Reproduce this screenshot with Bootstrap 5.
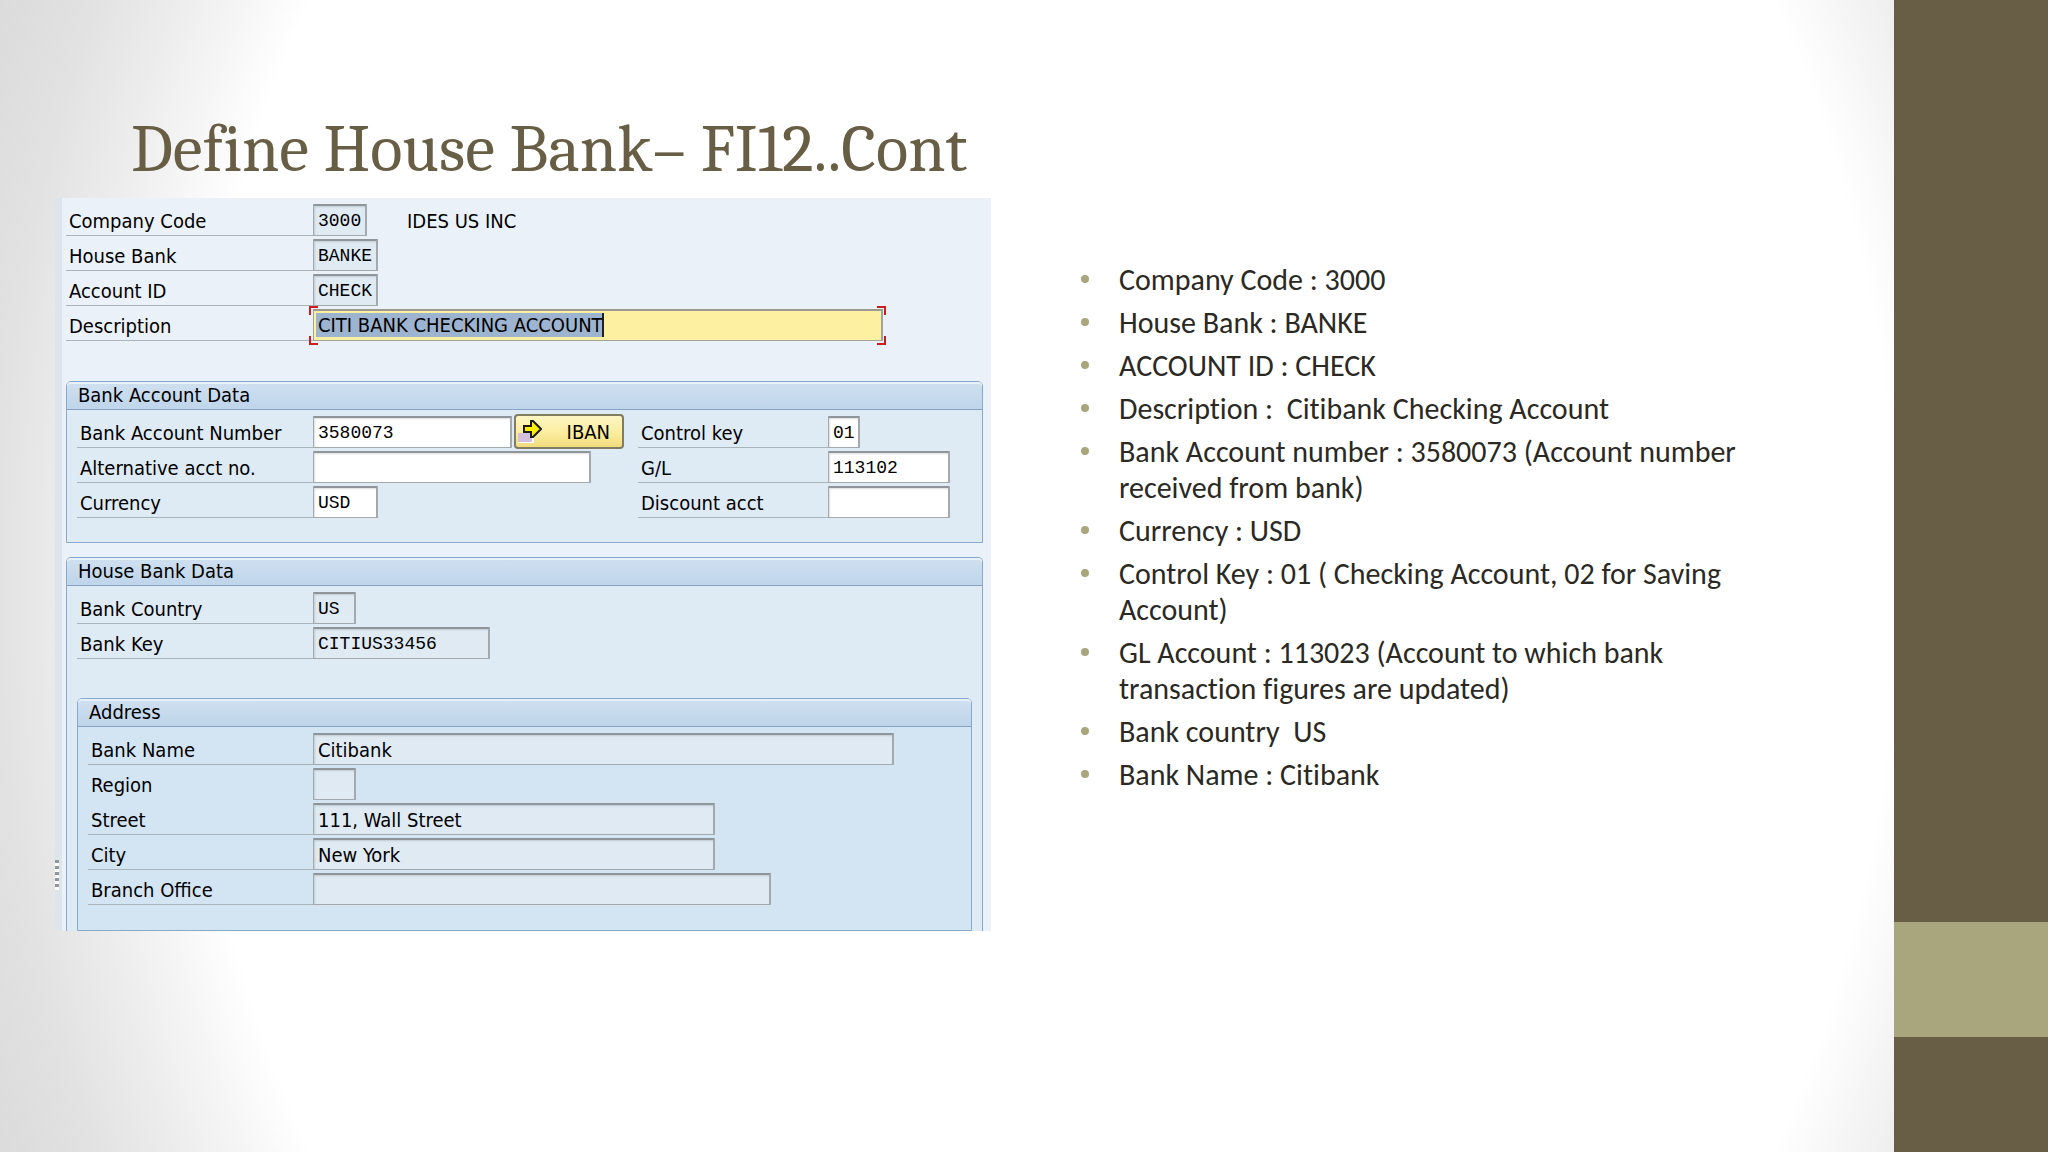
<!DOCTYPE html>
<html lang="en">
<head>
<meta charset="utf-8">
<meta name="viewport" content="width=device-width, initial-scale=1">
<title>Define House Bank</title>
<link href="https://cdn.jsdelivr.net/npm/bootstrap@5.3.0/dist/css/bootstrap.min.css" rel="stylesheet">
<style>
  .slide { background: #fff radial-gradient(ellipse 46% 98% at 55% 50%, #fff 98%, #f1f1f1 108%, #e2e2e2 120%, #d8d8d8 134%); }
  .slide-title { font: 400 67px/80px Caladea, "Liberation Serif", serif; color: #675e45; padding: 110px 0 0 131px; margin: 0 0 8px; }
  .sap-col { flex: 0 0 936px; margin-left: 55px; }
  .sap { background: #eaf1f8; border-left: 7px solid #dbe5ea; padding: 6px 8px 0 4px; font: 20px/26px "DejaVu Sans Condensed", "DejaVu Sans", sans-serif; color: #000; }
  .grip { position: absolute; left: -7px; top: 662px; width: 4px; height: 30px; background: repeating-linear-gradient(#8f979c 0 3px, #fff 3px 6px); }
  .line { display: flex; height: 32px; margin-bottom: 3px; }
  .cap { flex: none; border-bottom: 1px solid #a9b3ba; padding: 4px 0 0 3px; white-space: nowrap; }
  .cap-a { width: 247px; } .cap-b { width: 236px; } .cap-c { width: 225px; } .cap-d { width: 190px; }
  .cap.bare { border-color: transparent; }
  .fld { height: 32px; flex: none; border: 1px solid #a3a9ad; border-top: 2px solid #8f9599; border-right-width: 2px; border-radius: 1px; background: #dfeaf3; padding: 0 0 0 4px; color: #000; font: inherit; outline: 0; box-shadow: inset 1px 1px 2px #0002; }
  .fld.mono { font: 18px/26px "Liberation Mono", monospace; }
  .fld.open { background: #fff; }
  .c-2 { width: 32px; } .c-3 { width: 43px; } .c-4 { width: 54px; } .c-5 { width: 65px; } .c-8 { width: 122px; } .c-11 { width: 177px; }
  .c-18 { width: 199px; } .c-24 { width: 278px; } .c-28 { width: 402px; } .c-30 { width: 458px; } .c-40 { width: 581px; }
  .focus { width: 570px; height: 32px; background: #fdf0a0; border: 1px solid #a3a39a; border-top: 2px solid #9a9a90; border-right-width: 2px; padding: 2px; }
  .focus input { display: block; border: 0; padding: 0 0 0 2px; width: 100%; height: 24px; outline: 0; font: inherit; color: #000; background: linear-gradient(90deg, #9db4d0 286px, #222 286px) 0 0 / 288px 100% no-repeat; }
  .corner { position: absolute; width: 9px; height: 9px; border: 0 solid #cc1d20; }
  .tl { left: -5px; top: -5px; border-width: 2px 0 0 2px; } .tr { right: -5px; top: -5px; border-width: 2px 2px 0 0; }
  .bl { left: -5px; bottom: -5px; border-width: 0 0 2px 2px; } .br { right: -5px; bottom: -5px; border-width: 0 2px 2px 0; }
  .group { border: 1px solid #86a9cd; border-radius: 5px 5px 0 0; background: #deeaf4; }
  .group h2 { font: inherit; line-height: 27px; height: 28px; margin: 0 0 6px; padding: 0 0 0 11px; border-bottom: 1px solid #86a3c6; border-radius: 4px 4px 0 0; background: linear-gradient(#cfe0f0, #bfd5ea); box-shadow: inset 0 2px #e6f0f8; }
  .lines { padding: 0 10px; }
  .account { margin: 40px 0 14px; padding-bottom: 21px; }
  .account .left-half { width: 561px; }
  .house { border-bottom: 0; }
  .address { background: #d3e5f3; margin: 39px 10px 0; padding-bottom: 22px; }
  .iban { width: 110px; height: 35px; margin: -2px 0 0 2px; padding: 0 12px 0 2px; border: 2px solid #817c62; border-radius: 4px; background: linear-gradient(#fdf6c4, #fbeb9a 60%, #f0dc7e); font: inherit; }
  .facts { font: 30px/36px Carlito, Lato, sans-serif; font-variant-ligatures: none; color: #2b2924; margin: 64px 0 0 90px; width: 664px; }
  .facts li { display: flex; margin-bottom: 7px; white-space: pre-wrap; }
  .facts li::before { content: ""; flex: none; width: 8px; height: 8px; border-radius: 50%; background: #a9a57c; margin: 13px 30px 0 0; }
  .rail { flex: 0 0 154px; background: #675e45; }
  .rail-top { flex: 8 0 0; } .rail-band { flex: 1 0 0; background: #a9a57c; } .rail-foot { flex: 1 0 0; }
</style>
</head>
<body>
<div class="d-flex min-vh-100">
  <main class="slide flex-grow-1">
    <h1 class="slide-title">Define House Bank– FI12..Cont</h1>
    <div class="d-flex align-items-start">
      <form class="sap-col">
        <div class="sap position-relative">
          <span class="grip"></span>
          <div class="line"><label class="cap cap-a" for="cc">Company Code</label><input class="fld mono c-4" id="cc" value="3000" readonly><span class="ps-4 ms-3 pt-1">IDES US INC</span></div>
          <div class="line"><label class="cap cap-a" for="hb">House Bank</label><input class="fld mono c-5" id="hb" value="BANKE" readonly></div>
          <div class="line"><label class="cap cap-a" for="ai">Account ID</label><input class="fld mono c-5" id="ai" value="CHECK" readonly></div>
          <div class="line"><label class="cap cap-a" for="ds">Description</label>
            <div class="focus position-relative"><input id="ds" value="CITI BANK CHECKING ACCOUNT"><span class="corner tl"></span><span class="corner tr"></span><span class="corner bl"></span><span class="corner br"></span></div></div>
          <section class="group account">
            <h2>Bank Account Data</h2>
            <div class="lines d-flex">
              <div class="left-half">
                <div class="line"><label class="cap cap-b" for="ban">Bank Account Number</label><input class="fld mono open c-18" id="ban" value="3580073">
                  <button type="button" class="iban d-flex align-items-center justify-content-between"><svg width="24" height="28" viewBox="0 0 24 28" aria-hidden="true"><path d="M0 15h16v10H0z" fill="#fff"/><path d="M0 15h14v9H0z" fill="#d3bfdc"/><path d="M6 8h7V3h2l8 8-8 8h-2v-5H6z" fill="#ffee00" stroke="#1a1a1a" stroke-width="2"/></svg>IBAN</button></div>
                <div class="line"><label class="cap cap-b" for="alt">Alternative acct no.</label><input class="fld mono open c-24" id="alt"></div>
                <div class="line"><label class="cap cap-b" for="cur">Currency</label><input class="fld mono open c-5" id="cur" value="USD"></div>
              </div>
              <div>
                <div class="line"><label class="cap cap-d" for="ck">Control key</label><input class="fld mono open c-2" id="ck" value="01"></div>
                <div class="line"><label class="cap cap-d" for="gl">G/L</label><input class="fld mono open c-8" id="gl" value="113102"></div>
                <div class="line"><label class="cap cap-d" for="da">Discount acct</label><input class="fld mono open c-8" id="da"></div>
              </div>
            </div>
          </section>
          <section class="group house">
            <h2>House Bank Data</h2>
            <div class="lines">
              <div class="line"><label class="cap cap-b" for="bc">Bank Country</label><input class="fld mono c-3" id="bc" value="US" readonly></div>
              <div class="line"><label class="cap cap-b" for="bk">Bank Key</label><input class="fld mono c-11" id="bk" value="CITIUS33456" readonly></div>
            </div>
            <section class="group address">
              <h2>Address</h2>
              <div class="lines">
                <div class="line"><label class="cap cap-c" for="bn">Bank Name</label><input class="fld c-40" id="bn" value="Citibank" readonly></div>
                <div class="line"><label class="cap cap-c bare" for="rg">Region</label><input class="fld c-3" id="rg" readonly></div>
                <div class="line"><label class="cap cap-c" for="st">Street</label><input class="fld c-28" id="st" value="111, Wall Street" readonly></div>
                <div class="line"><label class="cap cap-c" for="ct">City</label><input class="fld c-28" id="ct" value="New York" readonly></div>
                <div class="line"><label class="cap cap-c" for="bo">Branch Office</label><input class="fld c-30" id="bo" readonly></div>
              </div>
            </section>
          </section>
        </div>
      </form>
      <ul class="facts list-unstyled">
        <li>Company Code : 3000</li>
        <li>House Bank : BANKE</li>
        <li>ACCOUNT ID : CHECK</li>
        <li>Description :  Citibank Checking Account</li>
        <li>Bank Account number : 3580073 (Account number received from bank)</li>
        <li>Currency : USD</li>
        <li>Control Key : 01 ( Checking Account, 02 for Saving Account)</li>
        <li>GL Account : 113023 (Account to which bank transaction figures are updated)</li>
        <li>Bank country  US</li>
        <li>Bank Name : Citibank</li>
      </ul>
    </div>
  </main>
  <aside class="rail d-flex flex-column"><div class="rail-top"></div><div class="rail-band"></div><div class="rail-foot"></div></aside>
</div>
<script src="https://cdn.jsdelivr.net/npm/bootstrap@5.3.0/dist/js/bootstrap.bundle.min.js"></script>
</body>
</html>
